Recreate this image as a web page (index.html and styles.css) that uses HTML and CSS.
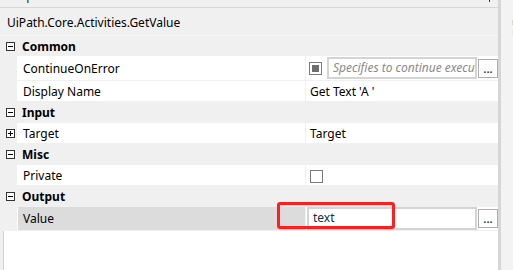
FILE: index.html
```html
<!DOCTYPE html>
<html>
<head>
<meta charset="utf-8">
<link rel="stylesheet" href="styles.css">
</head>
<body>
<div class="window">
  <div class="panel">
    <div class="titlebar"><span class="title">Properties</span><span class="pin"></span></div>
    <div class="desc">UiPath.Core.Activities.GetValue</div>
    <div class="grid">
      <div class="row header r-common"><span class="exp minus"></span><span class="cat">Common</span></div>
      <div class="row data tall r-coe">
        <div class="gutter"></div>
        <div class="name">ContinueOnError</div>
        <div class="value">
          <span class="check checked"><span class="fill"></span></span>
          <span class="input coe-input placeholder">Specifies to continue executing an activity even if the activity fails.</span>
          <span class="btn">...</span>
        </div>
      </div>
      <div class="row data">
        <div class="gutter"></div>
        <div class="name">Display Name</div>
        <div class="value text-val">Get Text 'A '</div>
      </div>
      <div class="row header"><span class="exp minus"></span><span class="cat">Input</span></div>
      <div class="row data">
        <div class="gutter"><span class="exp plus"></span></div>
        <div class="name">Target</div>
        <div class="value text-val">Target</div>
      </div>
      <div class="row header"><span class="exp minus"></span><span class="cat">Misc</span></div>
      <div class="row data">
        <div class="gutter"></div>
        <div class="name">Private</div>
        <div class="value"><span class="check private"></span></div>
      </div>
      <div class="row header"><span class="exp minus"></span><span class="cat">Output</span></div>
      <div class="row data tall selected r-value">
        <div class="gutter"></div>
        <div class="name">Value</div>
        <div class="value">
          <span class="input val-input">text</span>
          <span class="btn">...</span>
        </div>
      </div>
    </div>
    <div class="rest"></div>
  </div>
  <div class="strip"><span class="mark green"></span><span class="mark yellow"></span></div>
  <div class="highlight"></div>
</div>
</body>
</html>
```
FILE: styles.css
```css
html, body {
  margin: 0;
  padding: 0;
}
body {
  width: 513px;
  height: 270px;
  overflow: hidden;
  font-family: "Noto Sans", "Open Sans", sans-serif;
  font-size: 12px;
  color: #000;
  background: #fff;
}
.window {
  position: relative;
  display: flex;
  width: 513px;
  height: 270px;
}
.panel {
  width: 498px;
  height: 270px;
  display: flex;
  flex-direction: column;
  background: #f0f0f0;
}
.titlebar {
  height: 8px;
  box-sizing: border-box;
  border-bottom: 1px solid #d6d6d6;
  overflow: hidden;
  display: flex;
  align-items: flex-start;
  padding-left: 7px;
  background: #f0f0f0;
}
.title {
  line-height: 16px;
  margin-top: -12px;
  color: #222;
}
.pin {
  margin-left: auto;
  margin-right: 8px;
  width: 1px;
  height: 2px;
  background: #333;
}
.desc {
  height: 28px;
  box-sizing: border-box;
  padding-left: 7px;
  line-height: 30px;
  background: #f0f0f0;
  border-bottom: 1px solid #f6f6f6;
}
.grid {
  display: flex;
  flex-direction: column;
}
.row {
  height: 21px;
  box-sizing: border-box;
}
.row.tall {
  height: 25px;
}
.row.r-common {
  height: 20px;
}
.row.r-value {
  height: 24px;
}
.header {
  display: flex;
  align-items: center;
  padding-left: 6px;
  background: #f0f0f0;
}
.cat {
  font-weight: bold;
  margin-left: 7px;
}
.exp {
  position: relative;
  width: 9px;
  height: 9px;
  box-sizing: border-box;
  border: 1px solid #333;
  background: #fff;
  flex: none;
}
.exp::before {
  content: "";
  position: absolute;
  left: 1px;
  top: 3px;
  width: 5px;
  height: 1px;
  background: #000;
}
.exp.plus::after {
  content: "";
  position: absolute;
  left: 3px;
  top: 1px;
  width: 1px;
  height: 5px;
  background: #000;
}
.data {
  display: grid;
  grid-template-columns: 17px 288px 1fr;
}
.gutter {
  background: #f0f0f0;
  display: flex;
  align-items: center;
  padding-left: 6px;
}
.name {
  background: #fff;
  padding-left: 6px;
  display: flex;
  align-items: center;
  border-bottom: 1px solid #f0f0f0;
}
.value {
  background: #fff;
  border-left: 1px solid #f0f0f0;
  border-bottom: 1px solid #f0f0f0;
  display: flex;
  align-items: center;
}
.text-val {
  padding-left: 4px;
}
.selected .name {
  background: #dcdcdc;
  box-shadow: inset 1px 0 0 #fff;
}
.check {
  box-sizing: border-box;
  width: 13px;
  height: 13px;
  border: 1px solid #7a7a7a;
  background: #fff;
  display: flex;
  align-items: center;
  justify-content: center;
  flex: none;
}
.check.checked {
  margin-left: 3px;
  margin-right: 5px;
}
.check.private {
  margin-left: 4px;
  margin-top: 2px;
}
.fill {
  width: 7px;
  height: 7px;
  background: #6e6e6e;
}
.input {
  box-sizing: border-box;
  height: 22px;
  border: 2px solid #d4d4d4;
  background: #fff;
  padding-left: 4px;
  white-space: nowrap;
  overflow: hidden;
  line-height: 18px;
  flex: none;
}
.coe-input {
  width: 150px;
}
.placeholder {
  color: #8a8a8a;
  font-style: italic;
}
.val-input {
  width: 170px;
  margin-left: 1px;
  height: 23px;
  color: #1a2a4a;
}
.btn {
  box-sizing: border-box;
  width: 20px;
  height: 19px;
  margin-left: 1px;
  border: 1px solid #adadad;
  background: #fff;
  font-size: 11px;
  line-height: 18px;
  text-align: center;
  font-weight: bold;
  color: #1c3c6c;
  flex: none;
}
.rest {
  flex: 1;
  background: #fff;
  margin-left: 3px;
  border-left: 1px solid #d0d0d0;
}
.strip {
  width: 15px;
  height: 270px;
  box-sizing: border-box;
  border-left: 3px solid #d6d6d6;
  background: #f3f3f3;
  display: flex;
  flex-direction: column;
  align-items: flex-end;
  padding-top: 20px;
}
.mark {
  width: 1px;
  height: 5px;
}
.mark.green {
  background: #b8f0b0;
}
.mark.yellow {
  margin-top: 5px;
  background: #f0f0b8;
}
.highlight {
  position: absolute;
  left: 277px;
  top: 202px;
  width: 118px;
  height: 27px;
  box-sizing: border-box;
  border: 3px solid #ff1f1f;
  border-radius: 3px;
}
```
